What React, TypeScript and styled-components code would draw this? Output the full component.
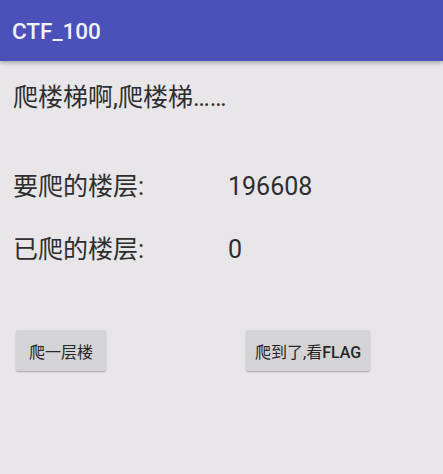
import React, {useState} from 'react';
import styled, {createGlobalStyle} from 'styled-components';

const GlobalStyle = createGlobalStyle`
  html, body {
    margin: 0;
    padding: 0;
    height: 100%;
    background: #e8e6e9;
  }
  body {
    font-family: Roboto, "Noto Sans CJK SC", sans-serif;
    color: #2e2e2e;
  }
`;

const Screen = styled.div`
  display: flex;
  flex-direction: column;
  min-height: 474px;
  background: #e8e6e9;
`;

const AppBar = styled.header`
  height: 61px;
  display: flex;
  align-items: center;
  padding: 0 12px;
  background: #4a51b9;
  color: #f2f2f6;
  font-size: 22.5px;
  font-weight: 500;
  box-shadow: 0 2px 4px rgba(0, 0, 0, 0.28);
  position: relative;
  z-index: 1;
`;

const Content = styled.main`
  display: flex;
  flex-direction: column;
  padding: 21px 13px 0;
`;

const Headline = styled.div`
  font-size: 25px;
  line-height: 32px;
  white-space: nowrap;
`;

const Floors = styled.div`
  display: flex;
  flex-direction: column;
  gap: 31px;
  margin-top: 57px;
`;

const Row = styled.div`
  display: grid;
  grid-template-columns: 215px auto;
  font-size: 25px;
  line-height: 32px;
`;

const Actions = styled.div`
  display: grid;
  grid-template-columns: 230px auto;
  justify-items: start;
  margin-top: 64px;
  padding-left: 3px;
`;

const Button = styled.button`
  min-width: 90px;
  height: 41px;
  padding: 0 9px;
  border: none;
  border-radius: 2px;
  background: #d4d3d6;
  color: #262626;
  font-family: Roboto, "Noto Sans CJK SC", sans-serif;
  font-size: 16px;
  font-weight: 400;
  box-shadow: 0 1px 2px rgba(0, 0, 0, 0.22), 0 1px 1px rgba(0, 0, 0, 0.08);
  cursor: pointer;
`;

// latin caps on buttons use the medium roboto face
const Caps = styled.span`
  font-weight: 500;
`;

export default function App() {
    const [target] = useState(196608);
    const [climbed, setClimbed] = useState(0);

    return (
        <Screen>
            <GlobalStyle/>
            <AppBar>CTF_100</AppBar>
            <Content>
                <Headline>爬楼梯啊,爬楼梯……</Headline>
                <Floors>
                    <Row>
                        <span>要爬的楼层:</span>
                        <span>{target}</span>
                    </Row>
                    <Row>
                        <span>已爬的楼层:</span>
                        <span>{climbed}</span>
                    </Row>
                </Floors>
                <Actions>
                    <Button onClick={() => setClimbed(c => c + 1)}>爬一层楼</Button>
                    <Button>爬到了,看<Caps>FLAG</Caps></Button>
                </Actions>
            </Content>
        </Screen>
    );
}
